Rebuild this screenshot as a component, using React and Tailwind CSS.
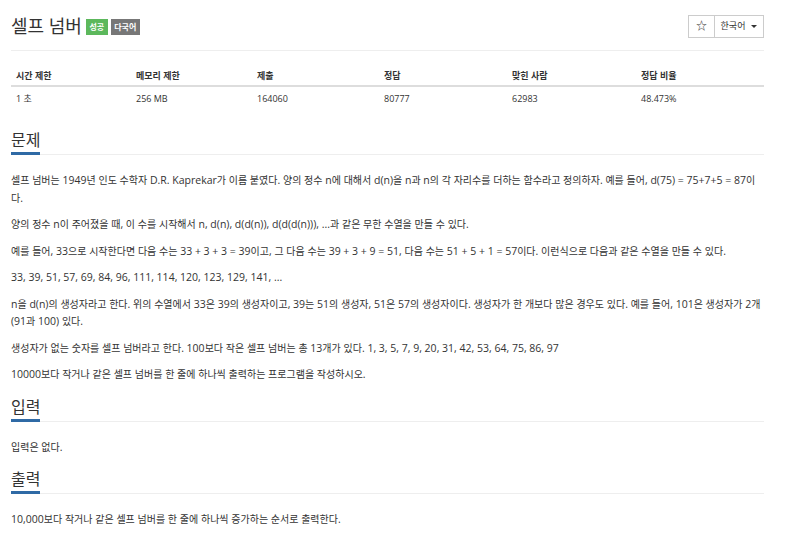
import React from 'react';

const FONT = "font-['Open_Sans','Noto_Sans_CJK_KR',sans-serif]";

const stats = [
  { label: '시간 제한', value: '1 초', w: 'w-[120px]' },
  { label: '메모리 제한', value: '256 MB', w: 'w-[121px]' },
  { label: '제출', value: '164060', w: 'w-[127px]' },
  { label: '정답', value: '80777', w: 'w-[128px]' },
  { label: '맞힌 사람', value: '62983', w: 'w-[129px]' },
  { label: '정답 비율', value: '48.473%', w: 'w-[128px]' },
];

// hangul runs are set a touch smaller than the latin text, like the original page
function Ko({ text }) {
  return text.split(/([가-힣]+)/).map((part, i) =>
    /[가-힣]/.test(part) ? <span key={i} className="text-[10px]">{part}</span> : part
  );
}

function Heading({ children }) {
  return (
    <div className="flex border-b border-[#eeeeee] mt-[13px] mb-[17px]">
      <span className="block text-[16px] leading-[20px] text-[#333] pb-[2px] border-b-[3px] border-[#2f6aa5] -mb-px">
        {children}
      </span>
    </div>
  );
}

function P({ children }) {
  return (
    <p className="text-[10.5px] leading-[17.5px] text-[#333] mb-[9px]">
      <Ko text={children} />
    </p>
  );
}

export default function App() {
  return (
    <div className={`${FONT} bg-white w-[800px] h-[542px] overflow-hidden`}>
      <div className="ml-[11px] w-[753px]">
        {/* title bar */}
        <div className="flex items-center justify-between pt-[14px] pb-[12px] border-b border-[#eeeeee]">
          <div className="flex items-center gap-[4px]">
            <h1 className="text-[18px] leading-[24px] text-[#333]">셀프 넘버</h1>
            <div className="flex items-center gap-[3px] mt-[2px]">
              <span className="h-[16px] px-[3.5px] flex items-center bg-[#5cb85c] text-white text-[8px] font-bold">성공</span>
              <span className="h-[16px] px-[3.5px] flex items-center bg-[#777777] text-white text-[8px] font-bold">다국어</span>
            </div>
          </div>
          <div className="flex h-[23px] border border-[#cccccc] text-[9px] text-[#333]">
            <div className="w-[26px] flex items-center justify-center border-r border-[#cccccc] text-[11px]">☆</div>
            <div className="w-[48px] flex items-center justify-center gap-[6px]">
              <span>한국어</span>
              <span className="w-0 h-0 border-l-[3px] border-r-[3px] border-t-[3px] border-l-transparent border-r-transparent border-t-[#333]"></span>
            </div>
          </div>
        </div>

        {/* stats table */}
        <table className="mt-[12px] border-collapse text-[9px] text-[#333]">
          <thead>
            <tr className="border-b-2 border-[#dddddd]">
              {stats.map((s) => (
                <th key={s.label} className={`${s.w} h-[23px] pt-[4px] px-[5px] text-left font-bold`}>{s.label}</th>
              ))}
            </tr>
          </thead>
          <tbody>
            <tr>
              {stats.map((s) => (
                <td key={s.label} className="h-[24px] px-[5px]">{s.value}</td>
              ))}
            </tr>
          </tbody>
        </table>

        <div className="mt-[20px]">
          <Heading>문제</Heading>
          <P>셀프 넘버는 1949년 인도 수학자 D.R. Kaprekar가 이름 붙였다. 양의 정수 n에 대해서 d(n)을 n과 n의 각 자리수를 더하는 함수라고 정의하자. 예를 들어, d(75) = 75+7+5 = 87이다.</P>
          <P>양의 정수 n이 주어졌을 때, 이 수를 시작해서 n, d(n), d(d(n)), d(d(d(n))), ...과 같은 무한 수열을 만들 수 있다.</P>
          <P>예를 들어, 33으로 시작한다면 다음 수는 33 + 3 + 3 = 39이고, 그 다음 수는 39 + 3 + 9 = 51, 다음 수는 51 + 5 + 1 = 57이다. 이런식으로 다음과 같은 수열을 만들 수 있다.</P>
          <P>33, 39, 51, 57, 69, 84, 96, 111, 114, 120, 123, 129, 141, ...</P>
          <P>n을 d(n)의 생성자라고 한다. 위의 수열에서 33은 39의 생성자이고, 39는 51의 생성자, 51은 57의 생성자이다. 생성자가 한 개보다 많은 경우도 있다. 예를 들어, 101은 생성자가 2개(91과 100) 있다.</P>
          <P>생성자가 없는 숫자를 셀프 넘버라고 한다. 100보다 작은 셀프 넘버는 총 13개가 있다. 1, 3, 5, 7, 9, 20, 31, 42, 53, 64, 75, 86, 97</P>
          <P>10000보다 작거나 같은 셀프 넘버를 한 줄에 하나씩 출력하는 프로그램을 작성하시오.</P>

          <Heading>입력</Heading>
          <P>입력은 없다.</P>

          <Heading>출력</Heading>
          <P>10,000보다 작거나 같은 셀프 넘버를 한 줄에 하나씩 증가하는 순서로 출력한다.</P>
        </div>
      </div>
    </div>
  );
}
